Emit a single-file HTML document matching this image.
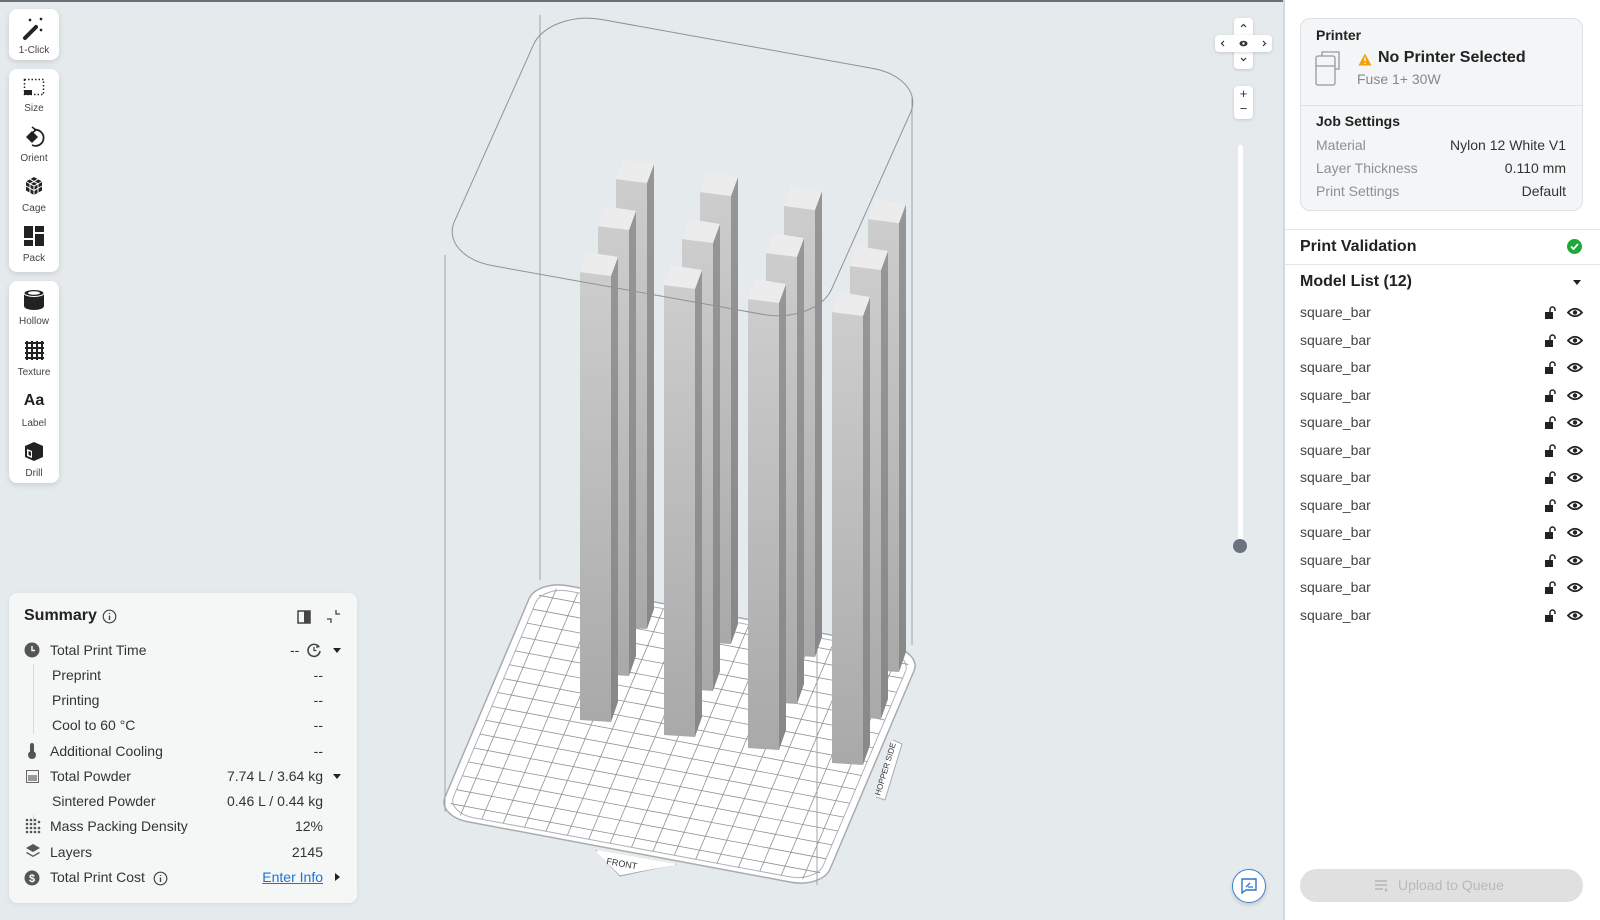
<!DOCTYPE html>
<html><head><meta charset="utf-8"><style>
*{box-sizing:border-box;margin:0;padding:0}
body{width:1600px;height:920px;overflow:hidden;background:#e5eaed;font-family:"Liberation Sans",sans-serif;position:relative;color:#222}
.abs{position:absolute}
.tb{position:absolute;left:9px;width:50px;background:#fff;border-radius:8px;box-shadow:0 2px 6px rgba(0,0,0,.12)}
.lbl{position:absolute;left:0;width:50px;text-align:center;font-size:10px;color:#444}
.ic{position:absolute;left:14px}
.rp{position:absolute;left:1283px;top:0;width:317px;height:920px;background:#fff;border-left:2px solid #d3d8dc}
.row{position:absolute;left:50px;font-size:14px;color:#333}
.v{position:absolute;left:200px;width:123px;text-align:right;font-size:14px;color:#333}
.ml{position:absolute;left:1300px;font-size:14px;color:#444}
</style></head><body>
<div class="abs" style="left:0;top:0;width:1600px;height:2px;background:#6b7078"></div>

<svg class="abs" style="left:0;top:0" width="1283" height="920">
<defs><linearGradient id="fg" x1="0" y1="0" x2="0" y2="1"><stop offset="0" stop-color="#cdcdcd"/><stop offset="1" stop-color="#a9a9a9"/></linearGradient>
<linearGradient id="sg" x1="0" y1="0" x2="0" y2="1"><stop offset="0" stop-color="#969696"/><stop offset="1" stop-color="#888"/></linearGradient></defs>
<path d="M596 850 L620 876 L676 864" fill="#fff" stroke="#a8abae" stroke-width="1.2"/>
<g transform="matrix(385,72,-100,236,537,580)">
<rect x="0" y="0" width="1" height="1" rx="0.08" ry="0.08" fill="#fff" stroke="#a8abae" stroke-width="1.5" vector-effect="non-scaling-stroke"/>
<rect x="0.02" y="0.02" width="0.96" height="0.96" rx="0.07" ry="0.07" fill="none" stroke="#b0b3b6" stroke-width="1" vector-effect="non-scaling-stroke"/>
<g id="grid" stroke="#8e9296" stroke-width="0.8"></g></g>
<path d="M597 851 L620 874 L675 864" fill="none" stroke="#fff" stroke-width="2"/>
<text x="606" y="864" font-size="9" fill="#333" transform="rotate(10 606 864)" font-family="Liberation Sans">FRONT</text>
<path d="M893 740 L902 744 L885 800 L876 797" fill="#fff" stroke="#a8abae"/>
<text x="880" y="796" font-size="8" fill="#333" transform="rotate(-73 880 796)" font-family="Liberation Sans">HOPPER SIDE</text>
<g stroke="#a0a4a8" stroke-width="1" fill="none">
<line x1="540" y1="15" x2="540" y2="580"/>
<line x1="445" y1="255" x2="445" y2="812"/>
<line x1="912" y1="98" x2="912" y2="645"/>
<line x1="817" y1="625" x2="817" y2="885"/>
</g>
<g id="bars"></g>
<g transform="matrix(377,68,-110,246,549,10)">
<rect x="0" y="0" width="1" height="1" rx="0.14" ry="0.14" fill="none" stroke="#8f9397" stroke-width="1" vector-effect="non-scaling-stroke"/>
</g>
</svg>
<script>
(function(){var g=document.getElementById('bars'),s='';
var cols=[[580,272,720],[664,285,735],[748,299,748],[832,312,763]];
var rows=[[36,-93],[18,-46],[0,0]];
rows.forEach(function(r){cols.forEach(function(c){var x=c[0]+r[0],t=c[1]+r[1],b=c[2]+r[1];
s+='<path d="M'+(x+31)+' '+(t+4)+' L'+(x+38)+' '+(t-15)+' L'+(x+38)+' '+(b-18)+' L'+(x+31)+' '+(b+2)+'Z" fill="url(#sg)"/>';
s+='<path d="M'+x+' '+t+' L'+(x+31)+' '+(t+4)+' L'+(x+31)+' '+(b+2)+' L'+x+' '+b+'Z" fill="url(#fg)"/>';
s+='<path d="M'+x+' '+t+' L'+(x+7)+' '+(t-20)+' L'+(x+38)+' '+(t-15)+' L'+(x+31)+' '+(t+4)+'Z" fill="#ececec"/>';});});
g.innerHTML=s;
var d='';for(var i=1;i<18;i++){var u=(i/18).toFixed(4);d+='M'+u+' 0.02V0.98';}
for(var j=1;j<17;j++){var w=(j/17).toFixed(4);d+='M0.02 '+w+'H0.98';}
document.getElementById('grid').innerHTML='<path vector-effect="non-scaling-stroke" d="'+d+'"/>';})();
</script>

<div class="tb" style="top:9px;height:51px">
<svg class="ic" style="top:7px;left:12px" width="26" height="26" viewBox="0 0 26 26"><path d="M4 22 L15 11" stroke="#222" stroke-width="4" stroke-linecap="round"/><g stroke="#222" stroke-width="1.3"><path d="M8 3l2 2M10 3l-2 2M19 2l2 2M21 2l-2 2M19 13l2 2M21 13l-2 2"/></g></svg>
<div class="lbl" style="top:36px">1-Click</div></div>
<div class="tb" style="top:69px;height:203px">
<svg class="ic" style="top:9px;left:14px" width="22" height="20" viewBox="0 0 22 20"><rect x="1.5" y="1.5" width="19" height="15" fill="none" stroke="#222" stroke-width="1.5" stroke-dasharray="1.5 2"/><rect x="1" y="12" width="8" height="5" fill="#222"/></svg>
<div class="lbl" style="top:34px">Size</div>
<svg class="ic" style="top:57px;left:15px" width="22" height="22" viewBox="0 0 22 22"><path d="M2 11 L8 5 L14 11 L8 17Z" fill="#222"/><path d="M10 4 A8 8 0 1 1 8 19" fill="none" stroke="#222" stroke-width="1.8"/><path d="M8 1 L12 4 L8 7" fill="none" stroke="#222" stroke-width="1.6"/></svg>
<div class="lbl" style="top:84px">Orient</div>
<svg class="ic" style="top:107px;left:15px" width="20" height="20" viewBox="0 0 20 20"><path d="M10 1 L18 5.5 V14.5 L10 19 L2 14.5 V5.5Z" fill="#222"/><g stroke="#fff" stroke-width="1" fill="none"><path d="M2 5.5 L10 10 L18 5.5 M10 10 V19 M6 3.2 L14 7.8 M14 3.2 L6 7.8 M6 7.8V17 M14 7.8V17 M2 10 L10 14.5 L18 10"/></g></svg>
<div class="lbl" style="top:134px">Cage</div>
<svg class="ic" style="top:156px;left:14px" width="22" height="22" viewBox="0 0 22 22"><rect x="1" y="1" width="9" height="12" fill="#222"/><rect x="12" y="1" width="9" height="6" fill="#222"/><rect x="12" y="9" width="9" height="12" fill="#222"/><rect x="1" y="15" width="9" height="6" fill="#222"/></svg>
<div class="lbl" style="top:184px">Pack</div></div>
<div class="tb" style="top:281px;height:202px">
<svg class="ic" style="top:7px;left:13px" width="24" height="24" viewBox="0 0 24 24"><path d="M2 5 V18 A10 4 0 0 0 22 18 V5Z" fill="#222"/><ellipse cx="12" cy="5" rx="10" ry="3.5" fill="#222" stroke="#fff" stroke-width="1"/><ellipse cx="12" cy="5" rx="6" ry="1.8" fill="#fff"/></svg>
<div class="lbl" style="top:35px">Hollow</div>
<svg class="ic" style="top:59px;left:15px" width="21" height="21" viewBox="0 0 21 21"><g stroke="#222" stroke-width="2"><path d="M1 3H20M1 8H20M1 13H20M1 18H20M3 1V20M8 1V20M13 1V20M18 1V20"/></g></svg>
<div class="lbl" style="top:86px">Texture</div>
<div class="abs" style="left:0;width:50px;top:111px;text-align:center;font-weight:bold;font-size:16px;color:#222">Aa</div>
<div class="lbl" style="top:137px">Label</div>
<svg class="ic" style="top:160px;left:15px" width="20" height="21" viewBox="0 0 20 21"><path d="M10 1 L19 5 V16 L10 20 L1 16 V5Z" fill="#222"/><path d="M3 8 L8 10 V17 L3 15Z" fill="#fff"/><path d="M4.5 10 L7 11 V15 L4.5 14Z" fill="#222"/></svg>
<div class="lbl" style="top:187px">Drill</div></div>

<div class="abs" style="left:1234px;top:18px;width:19px;height:51px;background:#fff;border-radius:4px;box-shadow:0 1px 3px rgba(0,0,0,.15)"></div>
<div class="abs" style="left:1215px;top:35px;width:57px;height:17px;background:#fff;border-radius:4px;box-shadow:0 1px 3px rgba(0,0,0,.15)"></div>
<div class="abs" style="left:1234px;top:35px;width:19px;height:17px;background:#fff"></div>
<svg class="abs" style="left:1215px;top:18px" width="57" height="51" viewBox="0 0 57 51"><g stroke="#333" stroke-width="1.2" fill="none"><path d="M26 9l2.5-2.5 2.5 2.5M26 40l2.5 2.5 2.5-2.5M9 23l-2.5 2.5 2.5 2.5M48 23l2.5 2.5-2.5 2.5"/></g><ellipse cx="28.5" cy="25.5" rx="4" ry="2.8" fill="#333"/><circle cx="28.5" cy="25.5" r="1.2" fill="#fff"/></svg>
<div class="abs" style="left:1234px;top:86px;width:19px;height:33px;background:#fff;border-radius:4px;box-shadow:0 1px 3px rgba(0,0,0,.15);text-align:center;font-size:13px;line-height:15px;color:#333">+<br>−</div>
<div class="abs" style="left:1238px;top:145px;width:5px;height:400px;background:#fff;border-radius:3px"></div>
<div class="abs" style="left:1233px;top:539px;width:14px;height:14px;background:#6b7280;border-radius:50%"></div>
<div class="abs" style="left:1232px;top:869px;width:34px;height:34px;border-radius:50%;background:#fff;border:1.5px solid #3b82d6;box-shadow:0 2px 4px rgba(0,0,0,.15)"></div>
<svg class="abs" style="left:1240px;top:877px" width="18" height="18" viewBox="0 0 18 18"><path d="M2 2H16V13H6L2 16Z" fill="none" stroke="#2f74c8" stroke-width="1.4"/><path d="M6 10L10 6M8 10H13" stroke="#2f74c8" stroke-width="1.3"/></svg>

<div class="abs" style="left:9px;top:593px;width:348px;height:310px;background:#f5f7f7;border-radius:8px;box-shadow:0 1px 4px rgba(0,0,0,.08)"></div>
<div class="abs" style="left:24px;top:607px;font-size:16px;font-weight:bold;color:#222">Summary</div>
<svg class="abs" style="left:102px;top:609px" width="15" height="15"><circle cx="7.5" cy="7.5" r="6.3" fill="none" stroke="#444" stroke-width="1.2"/><path d="M7.5 6.5V11M7.5 4V5" stroke="#444" stroke-width="1.4"/></svg>
<svg class="abs" style="left:297px;top:610px" width="14" height="14"><rect x="1" y="1" width="12" height="12" fill="none" stroke="#444" stroke-width="1.5"/><rect x="7" y="1" width="6" height="12" fill="#444"/></svg>
<svg class="abs" style="left:326px;top:609px" width="16" height="16" fill="none" stroke="#444" stroke-width="1.3"><path d="M10 1V5H14M1 10H5V14"/></svg>
<div class="abs" style="left:33px;top:664px;width:1px;height:70px;background:#d5dadd"></div>
<div class="abs" style="left:33px;top:815px;width:1px;height:15px;background:#d5dadd"></div>
<svg class="abs" style="left:24px;top:642px" width="16" height="16"><circle cx="8" cy="8" r="7.5" fill="#555"/><path d="M8 4V8.5H11" stroke="#fff" stroke-width="1.4" fill="none"/></svg>
<div class="row" style="top:642px">Total Print Time</div>
<div class="abs" style="left:290px;top:642px;font-size:14px;color:#333">--</div>
<svg class="abs" style="left:306px;top:642px" width="16" height="16"><path d="M13 5 A6 6 0 1 0 14 9" fill="none" stroke="#444" stroke-width="1.6"/><path d="M11 2 L14 5 L10 6" fill="#444"/><path d="M8 5V8.5H10.5" stroke="#444" stroke-width="1.3" fill="none"/></svg>
<div class="abs" style="left:333px;top:648px;border:4px solid transparent;border-top:5px solid #222"></div>
<div class="row" style="top:667px;left:52px">Preprint</div><div class="v" style="top:667px">--</div>
<div class="row" style="top:692px;left:52px">Printing</div><div class="v" style="top:692px">--</div>
<div class="row" style="top:717px;left:52px">Cool to 60 °C</div><div class="v" style="top:717px">--</div>
<svg class="abs" style="left:27px;top:742px" width="10" height="18"><rect x="3" y="1" width="4" height="12" rx="2" fill="#555"/><circle cx="5" cy="13" r="4" fill="#555"/></svg>
<div class="row" style="top:743px">Additional Cooling</div><div class="v" style="top:743px">--</div>
<svg class="abs" style="left:26px;top:770px" width="13" height="13"><rect x="0.5" y="0.5" width="12" height="12" fill="none" stroke="#666"/><rect x="2" y="5" width="9" height="6" fill="#999"/></svg>
<div class="row" style="top:768px">Total Powder</div>
<div class="v" style="top:768px">7.74 L / 3.64 kg</div>
<div class="abs" style="left:333px;top:774px;border:4px solid transparent;border-top:5px solid #222"></div>
<div class="row" style="top:793px;left:52px">Sintered Powder</div>
<div class="v" style="top:793px">0.46 L / 0.44 kg</div>
<svg class="abs" style="left:25px;top:818px" width="16" height="16"><g fill="#555"><circle cx="2" cy="2" r="1.3"/><circle cx="6" cy="2" r="1.3"/><circle cx="10" cy="2" r="1.3"/><circle cx="14" cy="4" r="1.3"/><circle cx="2" cy="6" r="1.3"/><circle cx="6" cy="6" r="1.3"/><circle cx="10" cy="6" r="1.3"/><circle cx="2" cy="10" r="1.3"/><circle cx="6" cy="10" r="1.3"/><circle cx="10" cy="10" r="1.3"/><circle cx="14" cy="10" r="1.3"/><circle cx="2" cy="14" r="1.3"/><circle cx="6" cy="14" r="1.3"/><circle cx="10" cy="14" r="1.3"/><circle cx="14" cy="14" r="1.3"/></g></svg>
<div class="row" style="top:818px">Mass Packing Density</div>
<div class="v" style="top:818px">12%</div>
<svg class="abs" style="left:25px;top:843px" width="16" height="16"><path d="M8 1 L15 5 L8 9 L1 5Z" fill="#555"/><path d="M2 9 L8 12.5 L14 9 L15 10 L8 14 L1 10Z" fill="#555"/></svg>
<div class="row" style="top:844px">Layers</div>
<div class="v" style="top:844px">2145</div>
<svg class="abs" style="left:24px;top:870px" width="16" height="16"><circle cx="8" cy="8" r="7.5" fill="#555"/><text x="8" y="12" font-size="11" font-weight="bold" fill="#fff" text-anchor="middle" font-family="Liberation Sans">$</text></svg>
<div class="row" style="top:869px">Total Print Cost</div>
<svg class="abs" style="left:153px;top:871px" width="15" height="15"><circle cx="7.5" cy="7.5" r="6.3" fill="none" stroke="#444" stroke-width="1.2"/><path d="M7.5 6.5V11M7.5 4V5" stroke="#444" stroke-width="1.4"/></svg>
<div class="v" style="top:869px;color:#1a73d9;text-decoration:underline">Enter Info</div>
<div class="abs" style="left:335px;top:873px;border:4px solid transparent;border-left:5px solid #222"></div>

<div class="rp"></div>
<div class="abs" style="left:1300px;top:18px;width:283px;height:193px;background:#f3f5f6;border:1px solid #dde1e4;border-radius:10px"></div>
<div class="abs" style="left:1300px;top:105px;width:283px;height:1px;background:#dde1e4"></div>
<div class="abs" style="left:1316px;top:27px;font-size:14px;font-weight:bold;color:#222">Printer</div>
<svg class="abs" style="left:1315px;top:51px" width="26" height="36"><g fill="none" stroke="#999" stroke-width="1.3"><rect x="1" y="5" width="19" height="29" rx="2"/><path d="M1 15H20M7 5V1H24V18H20"/></g></svg>
<svg class="abs" style="left:1358px;top:53px" width="14" height="13"><path d="M7 0.5 L13.5 12.5 H0.5Z" fill="#f59e0b"/><path d="M7 4.5V8.5M7 10V11" stroke="#fff" stroke-width="1.4"/></svg>
<div class="abs" style="left:1378px;top:49px;font-size:16px;font-weight:bold;color:#222">No Printer Selected</div>
<div class="abs" style="left:1357px;top:71px;font-size:14px;color:#888">Fuse 1+ 30W</div>
<div class="abs" style="left:1316px;top:113px;font-size:14px;font-weight:bold;color:#222">Job Settings</div>
<div class="abs" style="left:1316px;top:137px;font-size:14px;color:#8a9197">Material</div>
<div class="abs" style="left:1400px;width:166px;text-align:right;top:137px;font-size:14px;color:#333">Nylon 12 White V1</div>
<div class="abs" style="left:1316px;top:160px;font-size:14px;color:#8a9197">Layer Thickness</div>
<div class="abs" style="left:1400px;width:166px;text-align:right;top:160px;font-size:14px;color:#333">0.110 mm</div>
<div class="abs" style="left:1316px;top:183px;font-size:14px;color:#8a9197">Print Settings</div>
<div class="abs" style="left:1400px;width:166px;text-align:right;top:183px;font-size:14px;color:#333">Default</div>
<div class="abs" style="left:1285px;top:229px;width:315px;height:1px;background:#e3e6e9"></div>
<div class="abs" style="left:1285px;top:264px;width:315px;height:1px;background:#e3e6e9"></div>
<div class="abs" style="left:1300px;top:238px;font-size:16px;font-weight:bold;color:#222">Print Validation</div>
<svg class="abs" style="left:1567px;top:239px" width="15" height="15"><circle cx="7.5" cy="7.5" r="7.5" fill="#1fa83a"/><path d="M4 7.5L6.5 10L11 5" stroke="#fff" stroke-width="1.7" fill="none"/></svg>
<div class="abs" style="left:1300px;top:273px;font-size:16px;font-weight:bold;color:#222">Model List (12)</div>
<div class="abs" style="left:1573px;top:280px;border:4.5px solid transparent;border-top:5px solid #222"></div>
<div id="ml"></div>
<script>
(function(){var s='';for(var i=0;i<12;i++){var y=304+i*27.5;
s+='<div class="ml" style="top:'+y+'px">square_bar</div>';
s+='<svg class="abs" style="left:1544px;top:'+(y+2)+'px" width="12" height="13"><rect x="1" y="6" width="8" height="7" fill="#222"/><path d="M6 6V3.5A2.5 2.5 0 0 1 11 3.5V5" fill="none" stroke="#222" stroke-width="1.5"/></svg>';
s+='<svg class="abs" style="left:1567px;top:'+(y+3)+'px" width="16" height="11"><path d="M1 5.5Q8 -2 15 5.5Q8 13 1 5.5Z" fill="none" stroke="#222" stroke-width="1.8"/><circle cx="8" cy="5.5" r="2.2" fill="#222"/></svg>';}
document.getElementById('ml').innerHTML=s;})();
</script>
<div class="abs" style="left:1300px;top:869px;width:283px;height:33px;background:#e0e0e0;border-radius:17px"></div>
<svg class="abs" style="left:1374px;top:879px" width="15" height="14"><g stroke="#b3b6b9" stroke-width="1.6"><path d="M1 2H13M1 6H13M1 10H9"/></g><path d="M11 9L14 11L11 13Z" fill="#b3b6b9"/></svg>
<div class="abs" style="left:1398px;top:877px;font-size:14px;color:#b5b9bd">Upload to Queue</div>
</body></html>
